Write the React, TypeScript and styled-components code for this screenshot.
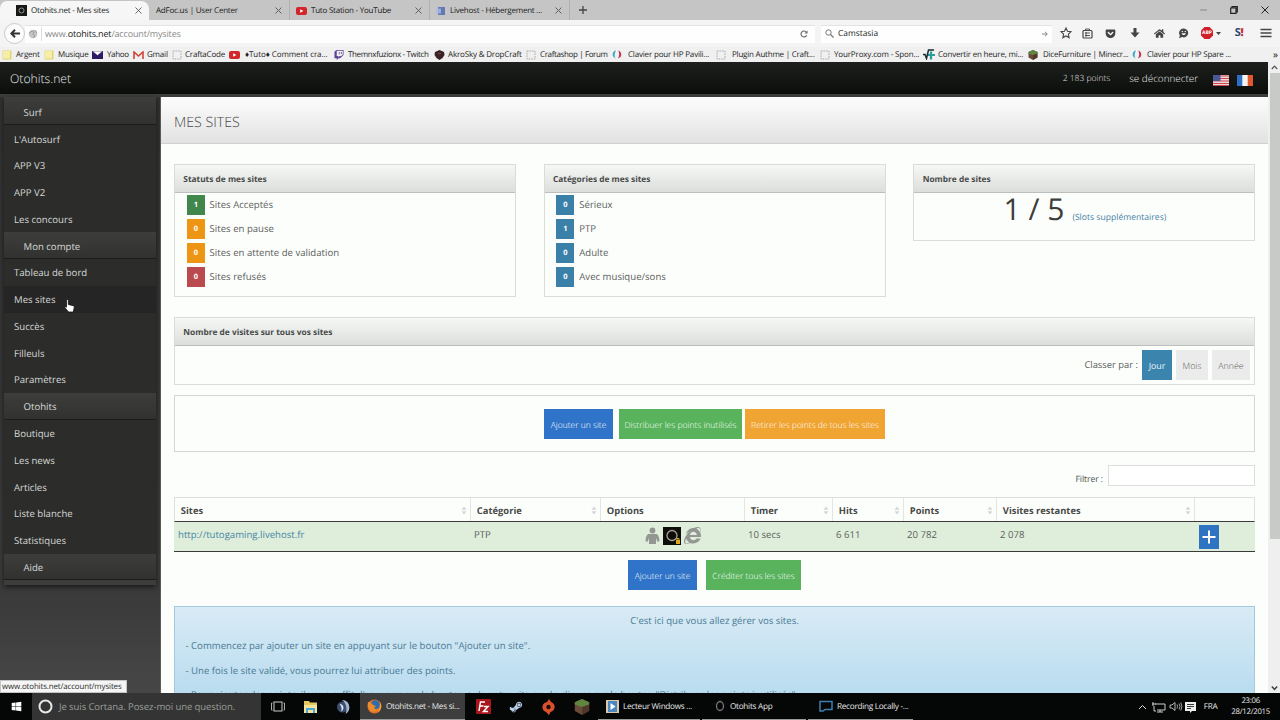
import React from 'react';
import styled, { createGlobalStyle, css } from 'styled-components';
import { FaHome, FaWindows, FaSteamSymbol, FaInternetExplorer, FaTwitch, FaGetPocket } from 'react-icons/fa';

const Global = createGlobalStyle`
  * { box-sizing: border-box; }
  html, body { margin: 0; padding: 0; overflow: hidden; }
  body { font-family: "Open Sans", "Noto Sans", sans-serif; font-size: 9.6px; color: #5c5e5c; text-rendering: geometricPrecision; }
  svg { display: block; flex: none; }
`;

const Screen = styled.div`
  width: 1280px; height: 720px; display: flex; flex-direction: column; overflow: hidden; position: relative; background: #fcfefc;
`;

/* ---------- browser chrome ---------- */
const TabBar = styled.div`
  height: 20px; flex: none; background: #c5c5c5; display: flex; align-items: stretch; color: #1c1c1c; font-size: 8px;
`;
const Tab = styled.div<{ $w: number; $active?: boolean; $pad: number }>`
  width: ${p => p.$w}px; padding-left: ${p => p.$pad}px; padding-right: 7px; padding-top: 1px; display: flex; align-items: center;
  ${p => p.$active ? css`background: #f5f6f5; border-radius: 7px 8px 0 0; margin-top: 1px; padding-bottom: 1px;` : css`border-right: 1px solid #b0b0b0;`}
`;
const TabIcon = styled.span<{ $w?: number }>`
  width: ${p => p.$w ?? 15}px; flex: none; display: flex;
`;
const TabText = styled.span`
  flex: 1; white-space: nowrap; letter-spacing: -0.22px;
`;
const NewTab = styled.div`
  width: 25px; display: flex; align-items: center; justify-content: center;
`;
const WindowButtons = styled.div`
  margin-left: auto; width: 81px; display: flex; justify-content: space-between; align-items: center; padding: 0 11px 0 1px;
`;
const NavBar = styled.div`
  height: 27px; flex: none; background: #f3f4f3; display: flex; align-items: center; padding: 0 8px 0 4px; color: #222;
`;
const BackButton = styled.div`
  width: 21px; height: 21px; border-radius: 50%; border: 1px solid #c9cac9; background: #fbfcfb; display: flex; align-items: center; justify-content: center; flex: none;
`;
const UrlField = styled.div`
  width: 790px; flex: none; height: 18px; background: #fdfefd; display: flex; align-items: center; padding: 0 7px 1px 3px; font-size: 9px; color: #8a8a8a; border-top: 1px solid #e2e3e2;
  b { font-weight: 400; color: #222; }
`;
const UrlDivider = styled.i`
  width: 1px; height: 14px; background: #ddd; margin: 0 3px 0 3px;
`;
const UrlText = styled.span`
  flex: 1; letter-spacing: -0.16px;
`;
const SearchField = styled.div`
  width: 231px; flex: none; height: 18px; margin-left: 6px; background: #fdfefd; border-top: 1px solid #e2e3e2; display: flex; align-items: center; padding: 0 4px 1px; font-size: 8.4px; gap: 4px;
  span { flex: 1; }
`;
const ToolIcons = styled.div`
  flex: 1; display: grid; grid-template-columns: 22px 21px 25px 24px 24px 24px 32px 24px 1fr; justify-items: center; align-items: center; padding: 0 0 1px 3px;
  > :last-child { justify-self: end; }
`;
const AbpWrap = styled.div`
  display: flex; align-items: center; gap: 3px;
`;
const AbpBadge = styled.div`
  width: 12px; height: 12px; background: #cf1f28; color: #fff; font: 700 5px/12px "Open Sans", sans-serif; text-align: center;
  clip-path: polygon(29% 0, 71% 0, 100% 29%, 100% 71%, 71% 100%, 29% 100%, 0 71%, 0 29%);
`;
const SBadge = styled.div`
  font: 700 11px/12px "Open Sans", sans-serif; color: #2b4a78; letter-spacing: -0.3px;
  b { color: #d8262c; }
`;
const Bookmarks = styled.div`
  height: 15px; flex: none; background: #eff0ef; display: flex; align-items: center; padding-left: 2px; color: #1f1f1f; font-size: 8px;
`;
const Bookmark = styled.div<{ $w: number }>`
  width: ${p => p.$w}px; flex: none; display: flex; align-items: center; white-space: nowrap;
`;
const BookmarkIcon = styled.span<{ $w: number }>`
  width: ${p => p.$w}px; flex: none; display: flex;
`;
const BookmarkText = styled.span<{ $ls: number }>`
  letter-spacing: ${p => p.$ls}px;
`;
const More = styled.span`
  font-size: 10px; line-height: 10px; margin: -2px 0 0 1px;
`;

/* ---------- page ---------- */
const Viewport = styled.div`
  height: 631px; flex: none; display: flex;
`;
const Page = styled.div`
  width: 1268px; display: flex; flex-direction: column; overflow: hidden;
`;
const ScrollTrack = styled.div`
  width: 12px; background: #efefef; display: flex; flex-direction: column; align-items: center; padding: 3px 0 1px 1px; justify-content: space-between;
`;
const ScrollThumb = styled.div`
  width: 10px; height: 466px; background: #c8cac8; margin: 3px 0 auto;
`;
const SiteHeader = styled.header`
  height: 35px; flex: none; background: linear-gradient(#1e201e, #0d0f0d 92%); border-bottom: 3px solid #3c3d3c; display: flex; align-items: center; padding: 0 15px 0 10px; color: #d2d4d2;
`;
const Brand = styled.span`
  font-size: 12.2px; flex: 1; font-weight: 300; color: #e6e8e6;
`;
const Points = styled.span`
  font-size: 8.5px; font-weight: 300; margin-right: 19px; color: #e0e2e0;
`;
const Logout = styled.span`
  font-size: 9.9px; font-weight: 300; margin-right: 15px; color: #eceeec;
`;
const Flags = styled.span`
  display: flex; gap: 8px; padding-top: 4px;
`;
const Body = styled.div`
  flex: 1; display: flex; min-height: 0;
`;
const Sidebar = styled.nav`
  width: 161px; flex: none; background: linear-gradient(#303130, #3a3b3a 85%, #464746); border-right: 1px solid #5a5b5a; padding: 0 4px;
`;
const Menu = styled.div`
  width: 152px; background: #2c2d2b; box-shadow: 0 2px 5px #181918; border-bottom: 5px solid #3d3e3c;
`;
const MenuItem = styled.div<{ $head?: boolean; $hover?: boolean; $first?: boolean }>`
  height: ${p => p.$first ? 28.4 : 26.77}px; display: flex; align-items: center; color: #d6d8d6; font-size: 9.6px; padding-left: ${p => p.$head ? 19.5 : 10}px; padding-top: ${p => p.$first ? 2 : 0.6}px;
  ${p => p.$head && css`background: linear-gradient(#3d3e3c, #313230); box-shadow: inset 0 -1px #1b1c1b;`}
  ${p => p.$hover && css`background: #242524;`}
`;
const Content = styled.main`
  flex: 1; background: #fcfefc; min-width: 0; overflow: hidden;
`;
const TitleBar = styled.div`
  height: 47px; background: linear-gradient(#fcfdfc, #e1e2e1); border-bottom: 1px solid #cfd1cf; display: flex; align-items: center; padding: 4px 0 0 13px; font-size: 14.2px; font-weight: 300; color: #484a48;
`;
const Inner = styled.div`
  padding: 20px 13px 0;
`;
const PanelRow = styled.div`
  display: grid; grid-template-columns: 342px 342px 342px; column-gap: 27.7px; align-items: start; padding-bottom: 20px;
`;
const Panel = styled.section<{ $h: number }>`
  height: ${p => p.$h}px; border: 1px solid #dadcda; background: #fcfefc;
`;
const PanelHead = styled.div`
  height: 27.5px; background: linear-gradient(#f6f8f6, #dcdedc); border-bottom: 1.5px solid #bdbfbd; padding: 2px 0 0 8.3px; display: flex; align-items: center; font-size: 8.33px; font-weight: 700; color: #484a48;
`;
const StatList = styled.div`
  padding: 0 0 0 11.8px;
`;
const StatRow = styled.div`
  height: 24px; display: flex; align-items: center; gap: 4.8px;
`;
const Badge = styled.span<{ $c: string }>`
  width: 18px; height: 20px; background: ${p => p.$c}; color: #fff; font-size: 7.5px; font-weight: 700; display: flex; align-items: center; justify-content: center; margin-top: 1px;
`;
const SlotLine = styled.div`
  display: flex; align-items: baseline; justify-content: center; gap: 8px; line-height: 32px; padding-left: 1px;
`;
const BigNumber = styled.span`
  font-size: 30px; color: #3c3e3c; font-weight: 400;
`;
const SlotLink = styled.a`
  color: #4782a6; font-size: 8.6px;
`;
const SortLine = styled.div`
  height: 39px; display: flex; justify-content: flex-end; align-items: center; gap: 4px; padding-right: 4px;
`;
const SortLabel = styled.span`
  font-size: 9.4px; padding-bottom: 2px;
`;
const SortButton = styled.span<{ $w: number; $on?: boolean }>`
  width: ${p => p.$w}px; height: 30px; background: ${p => p.$on ? '#3a84ad' : '#eaebea'}; color: ${p => p.$on ? '#e8f4fa' : '#5c5e5c'};
  display: flex; align-items: center; justify-content: center; font-size: 8.8px; font-weight: ${p => p.$on ? 400 : 300}; padding-top: 2px;
`;
const ActionBox = styled.div`
  margin-top: 9.5px; height: 57px; border: 1px solid #d4d6d4; display: flex; justify-content: center; align-items: center; padding-top: 1px;
`;
const Button = styled.span<{ $c: string; $w: number; $ml?: number }>`
  width: ${p => p.$w}px; height: 30px; margin-left: ${p => p.$ml ?? 0}px; background: ${p => p.$c}; color: #fff; font-size: 8.5px; font-weight: 300;
  display: flex; align-items: center; justify-content: center; padding-top: 3px; white-space: nowrap;
`;
const FilterLine = styled.div`
  height: 45.5px; display: flex; justify-content: flex-end; align-items: flex-start; gap: 5px; font-size: 8.7px; padding-top: 13px;
`;
const FilterLabel = styled.span`
  line-height: 12px; padding-top: 8px; color: #4c4e4c; letter-spacing: -0.1px;
`;
const FilterInput = styled.span`
  width: 147px; height: 21px; border: 1px solid #dcdedc; background: #fff;
`;
const columns = css`
  display: grid; grid-template-columns: 296px 130px 144px 88px 71px 93px 198px 60px;
`;
const TableHead = styled.div`
  ${columns}
  height: 24.5px; border: 1px solid #dddfdd; border-bottom: 1px solid #3a3b3a; font-size: 9.4px; font-weight: 700; color: #484a48;
`;
const HeadCell = styled.div`
  display: flex; align-items: center; justify-content: space-between; padding: 2.5px 3px 0 5.8px; border-right: 1px solid #e3e5e3; white-space: nowrap;
  &:last-child { border-right: 0; }
`;
const TableRow = styled.div`
  ${columns}
  height: 30px; background: #dfeedb; border-bottom: 1px solid #3a3b3a; padding-left: 1px;
`;
const Cell = styled.div<{ $link?: boolean }>`
  padding: 6.3px 0 0 3px; line-height: 13px; color: ${p => p.$link ? '#4786a4' : '#5c5e5c'};
`;
const OptionIcons = styled.div`
  display: flex; align-items: flex-start; gap: 3px; padding: 5px 0 0 44px;
`;
const PlusButton = styled.div`
  width: 20px; height: 24px; margin: 3px 0 0 4px; background: #2f74c3; display: flex; align-items: center; justify-content: center;
`;
const BottomActions = styled.div`
  height: 54px; display: flex; justify-content: center; padding-top: 8px; gap: 9px;
`;
const InfoBox = styled.div`
  height: 120px; border: 1px solid #a3c9dc; background: linear-gradient(#d9ebf5, #bbddf0 80px); color: #4a7a94; padding: 7.5px 10.5px;
  p { margin: 0 0 11.8px; line-height: 13px; }
  p:first-child { text-align: center; }
  p:last-child { margin-top: -0.8px; }
`;

/* ---------- desktop ---------- */
const StatusTip = styled.div`
  position: absolute; left: 0; top: 680px; width: 127px; height: 13px; background: #f4f5f4; border: 1px solid #c4c5c4; color: #2e2e2e; font-size: 7.9px; letter-spacing: -0.12px; line-height: 12px; padding-left: 1px; white-space: nowrap;
`;
const Pointer = styled.div`
  position: absolute; left: 64px; top: 299px;
`;
const Taskbar = styled.div`
  height: 27px; flex: none; background: #050606; color: #e6e6e6; display: flex; align-items: stretch; font-size: 8.2px; letter-spacing: -0.28px;
`;
const StartButton = styled.div`
  width: 32px; display: flex; align-items: center; justify-content: center;
`;
const Cortana = styled.div`
  width: 229px; background: #333433; color: #9c9e9c; display: flex; align-items: center; gap: 6px; padding-left: 6px; font-size: 9.500px; letter-spacing: -0.08px;
`;
const TaskIcon = styled.div<{ $w: number }>`
  width: ${p => p.$w}px; display: flex; align-items: center; justify-content: center; flex: none;
`;
const TaskWindow = styled.div<{ $w: number; $on?: boolean; $pad?: number }>`
  width: ${p => p.$w}px; flex: none; display: flex; align-items: center; gap: 4px; padding-left: ${p => p.$pad ?? 7}px; white-space: nowrap; margin-right: 2px;
  background: ${p => p.$on ? '#3c3d3c' : 'transparent'}; border-bottom: 1px solid #9a9c9a;
`;
const Tray = styled.div`
  margin-left: auto; display: flex; align-items: center; padding-right: 10px;
`;
const Lang = styled.span`
  margin: 0 14px 0 7px; font-size: 8.2px;
`;
const Clock = styled.div`
  text-align: center; font-size: 7.8px; line-height: 11.4px; letter-spacing: -0.27px; padding-top: 1px;
`;

const Close = () => <svg width="7" height="7" viewBox="0 0 7 7"><path d="M.5.5l6 6M6.5.5l-6 6" stroke="#555" strokeWidth=".9" /></svg>;
const YouTube = () => <svg width="11" height="8" viewBox="0 0 11 8"><rect width="11" height="8" rx="2" fill="#d3262b" /><path d="M4.2 2.2v3.6L7.4 4z" fill="#fff" /></svg>;
const Folder = () => <svg width="10" height="10" viewBox="0 0 10 10"><rect x=".5" y=".5" width="9" height="9" rx="1" fill="#e3d272" /><path d="M1 1h7v7.500H1z" fill="#f7eea6" /></svg>;
const Blank = () => <svg width="10" height="10" viewBox="0 0 10 10"><rect x="1" y="1" width="8" height="8" fill="none" stroke="#999" strokeWidth=".8" strokeDasharray="1.6 1" /></svg>;
const Mail = () => <svg width="11" height="8" viewBox="0 0 11 8"><rect width="11" height="8" fill="#2c1a68" /><path d="M0 0l5.5 4.5L11 0z" fill="#fff" stroke="#2c1a68" strokeWidth=".6" /></svg>;
const Gmail = () => <svg width="11" height="8" viewBox="0 0 11 8"><rect width="11" height="8" fill="#eee" /><path d="M1 8V1l4.5 4L10 1v7" fill="none" stroke="#d0453c" strokeWidth="1.6" /></svg>;
const Akro = () => <svg width="11" height="10" viewBox="0 0 11 10"><path d="M5.5 0L10 2l.5 3-2 3-3 2-3-2-2-3L1 2z" fill="#3b2226" /><path d="M4 3l2 1 1-1" stroke="#9a5a5a" fill="none" strokeWidth=".8" /></svg>;
const Clavier = () => <svg width="10" height="9" viewBox="0 0 10 9"><path d="M4 .5C1 1 0 4 1.200 6.500L3.500 8.500C2 6 2.500 3 4 .5z" fill="#37a7c8" /><path d="M6.300.5C9.500 1.500 10 5 8.500 7L6 8.500C7.500 6 7.500 3 6.300.5z" fill="#c53350" /></svg>;
const Convert = () => <svg width="12" height="11" viewBox="0 0 12 11"><path d="M8 2.500v8M5 6h7" stroke="#2b9c9c" strokeWidth="2.200" /><path d="M0 5.500h2l1.500 4L5.500 1H11" fill="none" stroke="#1c2b2b" strokeWidth="1.500" /></svg>;
const Block = ({ s = 10 }: { s?: number }) => <svg width={s} height={s} viewBox="0 0 10 10"><path d="M5 0l4.500 2v5.500L5 10 .5 7.500V2z" fill="#6a4a38" /><path d="M5 0l4.500 2v1.500L5 5 .5 3.500V2z" fill="#5f8540" /><path d="M5 5v5l4.500-2.500v-4z" fill="#3e2c22" opacity=".6" /></svg>;
const Sort = () => <svg width="6" height="9" viewBox="0 0 6 9"><path d="M3 .5L5.500 3.800H.5zM3 8.500L.5 5.200h5z" fill="#d3d5d3" /></svg>;
const Bars = () => <svg width="12" height="10" viewBox="0 0 12 10"><path d="M.5 1.500h11M.5 5h11M.5 8.500h11" stroke="#444" strokeWidth="1.700" /></svg>;

const bookmarks: { icon: React.ReactNode; text: string; w: number; iw: number; ls?: number }[] = [
  { icon: <Folder />, text: 'Argent', w: 42, iw: 14, ls: -0.2 },
  { icon: <Folder />, text: 'Musique', w: 48, iw: 14, ls: -0.25 },
  { icon: <Mail />, text: 'Yahoo', w: 41, iw: 15, ls: -0.35 },
  { icon: <Gmail />, text: 'Gmail', w: 39, iw: 14, ls: -0.2 },
  { icon: <Blank />, text: 'CraftaCode', w: 57, iw: 13, ls: -0.2 },
  { icon: <YouTube />, text: '♦Tuto♦ Comment cra...', w: 105, iw: 16, ls: -0.07 },
  { icon: <FaTwitch size={10} color="#5b4496" />, text: 'Themnxfuzionx - Twitch', w: 100, iw: 14, ls: -0.36 },
  { icon: <Akro />, text: 'AkroSky & DropCraft', w: 92, iw: 14, ls: -0.17 },
  { icon: <Blank />, text: 'Craftashop | Forum', w: 86, iw: 14, ls: -0.37 },
  { icon: <Clavier />, text: 'Clavier pour HP Pavili...', w: 104, iw: 16, ls: -0.18 },
  { icon: <Blank />, text: 'Plugin Authme | Craft...', w: 104, iw: 16, ls: -0.22 },
  { icon: <Blank />, text: 'YourProxy.com - Spon...', w: 103, iw: 14, ls: -0.15 },
  { icon: <Convert />, text: 'Convertir en heure, mi...', w: 105, iw: 15, ls: -0.2 },
  { icon: <Block />, text: 'DiceFurniture | Minecr...', w: 104, iw: 15, ls: -0.24 },
  { icon: <Clavier />, text: 'Clavier pour HP Spare ...', w: 140, iw: 15, ls: -0.24 },
];

const menu: { text: string; head?: boolean; hover?: boolean }[] = [
  { text: 'Surf', head: true }, { text: "L'Autosurf" }, { text: 'APP V3' }, { text: 'APP V2' }, { text: 'Les concours' },
  { text: 'Mon compte', head: true }, { text: 'Tableau de bord' }, { text: 'Mes sites', hover: true }, { text: 'Succès' }, { text: 'Filleuls' }, { text: 'Paramètres' },
  { text: 'Otohits', head: true }, { text: 'Boutique' }, { text: 'Les news' }, { text: 'Articles' }, { text: 'Liste blanche' }, { text: 'Statistiques' },
  { text: 'Aide', head: true },
];

const statuses = [
  { n: 1, c: '#41864a', t: 'Sites Acceptés' },
  { n: 0, c: '#ee9613', t: 'Sites en pause' },
  { n: 0, c: '#ee9613', t: 'Sites en attente de validation' },
  { n: 0, c: '#bb4a4e', t: 'Sites refusés' },
];
const categories = [
  { n: 0, c: '#3a80a9', t: 'Sérieux' },
  { n: 1, c: '#3a80a9', t: 'PTP' },
  { n: 0, c: '#3a80a9', t: 'Adulte' },
  { n: 0, c: '#3a80a9', t: 'Avec musique/sons' },
];

const Stats = ({ title, rows }: { title: string; rows: typeof statuses }) => (
  <Panel $h={133}>
    <PanelHead>{title}</PanelHead>
    <StatList>
      {rows.map(r => <StatRow key={r.t}><Badge $c={r.c}>{r.n}</Badge>{r.t}</StatRow>)}
    </StatList>
  </Panel>
);

export default function App() {
  return (
    <Screen>
      <Global />
      <TabBar>
        <Tab $w={149} $pad={16} $active>
          <TabIcon><svg width="11" height="11" viewBox="0 0 11 11"><rect width="11" height="11" fill="#161816" /><circle cx="5.500" cy="5.500" r="2.500" fill="none" stroke="#999" /></svg></TabIcon>
          <TabText>Otohits.net - Mes sites</TabText><Close />
        </Tab>
        <Tab $w={141} $pad={7}><TabText>AdFoc.us | User Center</TabText><Close /></Tab>
        <Tab $w={140} $pad={6}><TabIcon><YouTube /></TabIcon><TabText>Tuto Station - YouTube</TabText><Close /></Tab>
        <Tab $w={140} $pad={6}>
          <TabIcon $w={14}><svg width="10" height="10" viewBox="0 0 10 10"><path d="M2 1h7v8H2z" fill="#6478b4" /><path d="M0 2.500h5v5H0z" fill="#a9bce0" opacity=".8" /></svg></TabIcon>
          <TabText>Livehost - Hébergement ...</TabText><Close />
        </Tab>
        <NewTab><svg width="8" height="8" viewBox="0 0 8 8"><path d="M4 0v8M0 4h8" stroke="#444" strokeWidth="1.300" /></svg></NewTab>
        <WindowButtons>
          <svg width="7" height="2"><path d="M0 1h7" stroke="#888" /></svg>
          <svg width="8" height="8" viewBox="0 0 8 8"><path d="M2 2V.700h5.300V6H6M.7 2h5.300v5.300H.7z" fill="none" stroke="#222" strokeWidth="1.200" /></svg>
          <svg width="8" height="8" viewBox="0 0 8 8"><path d="M.5.5l7 7M7.500.5l-7 7" stroke="#222" strokeWidth="1" /></svg>
        </WindowButtons>
      </TabBar>
      <NavBar>
        <BackButton><svg width="10" height="9" viewBox="0 0 10 9"><path d="M5 .8L1.300 4.500 5 8.200M1.500 4.500H10" fill="none" stroke="#333" strokeWidth="2" /></svg></BackButton>
        <UrlField>
          <svg width="10" height="10" viewBox="0 0 10 10"><circle cx="5" cy="5" r="4.300" fill="#c4c5c4" /><path d="M1 4l3-2 2 1-1 2 2 2-2 2M7 1l2 3" stroke="#9a9b9a" fill="none" /></svg>
          <UrlDivider />
          <UrlText>www.<b>otohits.net</b>/account/mysites</UrlText>
          <svg width="8" height="8" viewBox="0 0 8 8"><path d="M6.700 5.300A3 3 0 1 1 6.500 2.300" fill="none" stroke="#666" strokeWidth="1.100" /><path d="M7.500.5v3h-3z" fill="#666" /></svg>
        </UrlField>
        <SearchField>
          <svg width="9" height="9" viewBox="0 0 9 9"><circle cx="3.500" cy="3.500" r="2.700" fill="none" stroke="#777" /><path d="M5.500 5.500l3 3" stroke="#777" strokeWidth="1.200" /></svg>
          <span>Camstasia</span>
          <svg width="6" height="6" viewBox="0 0 6 6"><path d="M0 3h5M3 .8L5.300 3 3 5.200" fill="none" stroke="#777" strokeWidth=".9" /></svg>
        </SearchField>
        <ToolIcons>
          <svg width="12" height="12" viewBox="0 0 12 12"><path d="M6 1l1.500 3.300 3.500.4-2.600 2.400.7 3.500L6 8.900 2.900 10.600l.7-3.500L1 4.700l3.500-.4z" fill="none" stroke="#444" strokeWidth="1.100" /></svg>
          <svg width="11" height="11" viewBox="0 0 11 11"><rect x="1" y="2.500" width="9" height="7.500" rx="1" fill="none" stroke="#444" strokeWidth="1.200" /><path d="M3.500 2.500V1h4v1.500M3 5h5M3 7.500h5M4 4v5" fill="none" stroke="#444" strokeWidth=".9" /></svg>
          <FaGetPocket size={11} color="#444" />
          <svg width="10" height="10" viewBox="0 0 10 10"><path d="M3.500 0h3v4.500h3L5 9.500.5 4.500h3z" fill="#444" /></svg>
          <FaHome size={11} color="#444" />
          <svg width="11" height="11" viewBox="0 0 11 11"><path d="M5.800.6a4.400 4.400 0 1 1-1.600 8.500L1 10.300l.9-2.800A4.400 4.400 0 0 1 5.800.6z" fill="#444" /><path d="M3.500 5.300c.7 2.400 3.800 2.400 4.500 0z" fill="#f3f4f3" /><circle cx="4.300" cy="3.500" r=".7" fill="#f3f4f3" /><circle cx="7.300" cy="3.500" r=".7" fill="#f3f4f3" /></svg>
          <AbpWrap><AbpBadge>ABP</AbpBadge><svg width="5" height="3"><path d="M0 0h5L2.500 3z" fill="#444" /></svg></AbpWrap>
          <SBadge>S<b>!</b></SBadge>
          <Bars />
        </ToolIcons>
      </NavBar>
      <Bookmarks>
        {bookmarks.map((b, i) => (
          <Bookmark key={i} $w={b.w}><BookmarkIcon $w={b.iw}>{b.icon}</BookmarkIcon><BookmarkText $ls={b.ls ?? 0}>{b.text}</BookmarkText></Bookmark>
        ))}
        <More>»</More>
      </Bookmarks>

      <Viewport>
        <Page>
          <SiteHeader>
            <Brand>Otohits.net</Brand>
            <Points>2 183 points</Points>
            <Logout>se déconnecter</Logout>
            <Flags>
              <svg width="16" height="11" viewBox="0 0 16 11"><rect width="16" height="11" fill="#f0d8d8" /><path d="M0 1h16M0 3.500h16M0 6h16M0 8.500h16M0 10.700h16" stroke="#c94552" strokeWidth="1.200" /><rect width="7.500" height="6" fill="#4b5896" /></svg>
              <svg width="16" height="11" viewBox="0 0 16 11"><rect width="16" height="11" fill="#f4f4f4" /><rect width="5.300" height="11" fill="#2c6fc4" /><rect x="10.700" width="5.300" height="11" fill="#e0582c" /></svg>
            </Flags>
          </SiteHeader>
          <Body>
            <Sidebar>
              <Menu>
                {menu.map((m, i) => <MenuItem key={m.text} $head={m.head} $hover={m.hover} $first={i === 0}>{m.text}</MenuItem>)}
              </Menu>
            </Sidebar>
            <Content>
              <TitleBar>MES SITES</TitleBar>
              <Inner>
                <PanelRow>
                  <Stats title="Statuts de mes sites" rows={statuses} />
                  <Stats title="Catégories de mes sites" rows={categories} />
                  <Panel $h={77}>
                    <PanelHead>Nombre de sites</PanelHead>
                    <SlotLine><BigNumber>1 / 5</BigNumber><SlotLink>(Slots supplémentaires)</SlotLink></SlotLine>
                  </Panel>
                </PanelRow>
                <Panel $h={68}>
                  <PanelHead>Nombre de visites sur tous vos sites</PanelHead>
                  <SortLine>
                    <SortLabel>Classer par :</SortLabel>
                    <SortButton $w={30} $on>Jour</SortButton>
                    <SortButton $w={32}>Mois</SortButton>
                    <SortButton $w={38}>Année</SortButton>
                  </SortLine>
                </Panel>
                <ActionBox>
                  <Button $c="#2f74c8" $w={69}>Ajouter un site</Button>
                  <Button $c="#58b35c" $w={123} $ml={6}>Distribuer les points inutilisés</Button>
                  <Button $c="#f0a432" $w={140} $ml={3}>Retirer les points de tous les sites</Button>
                </ActionBox>
                <FilterLine><FilterLabel>Filtrer :</FilterLabel><FilterInput /></FilterLine>
                <TableHead>
                  <HeadCell>Sites<Sort /></HeadCell>
                  <HeadCell>Catégorie<Sort /></HeadCell>
                  <HeadCell>Options</HeadCell>
                  <HeadCell>Timer<Sort /></HeadCell>
                  <HeadCell>Hits<Sort /></HeadCell>
                  <HeadCell>Points<Sort /></HeadCell>
                  <HeadCell>Visites restantes<Sort /></HeadCell>
                  <HeadCell />
                </TableHead>
                <TableRow>
                  <Cell $link>http://tutogaming.livehost.fr</Cell>
                  <Cell>PTP</Cell>
                  <OptionIcons>
                    <svg width="15" height="18" viewBox="0 0 15 18"><circle cx="7.500" cy="3.500" r="2.900" fill="#949694" /><path d="M4 7h7c2 0 3 2 3.500 7l-2 1-1.500-4v6H4v-6l-1.500 4-2-1C1 9 2 7 4 7z" fill="#949694" /></svg>
                    <svg width="18" height="18" viewBox="0 0 18 18"><rect width="18" height="18" fill="#0d0e0b" /><circle cx="9" cy="8.500" r="5" fill="none" stroke="#a8a090" strokeWidth="1.300" /><path d="M13 13h4v4h-4z" fill="#e0a820" /><path d="M14 13v-1.500h2V13" stroke="#e0a820" fill="none" /></svg>
                    <FaInternetExplorer size={17} color="#949694" />
                  </OptionIcons>
                  <Cell>10 secs</Cell>
                  <Cell>6 611</Cell>
                  <Cell>20 782</Cell>
                  <Cell>2 078</Cell>
                  <PlusButton><svg width="14" height="14" viewBox="0 0 14 14"><path d="M7 .5v13M.5 7h13" stroke="#fff" strokeWidth="2" /></svg></PlusButton>
                </TableRow>
                <BottomActions>
                  <Button $c="#2f74c8" $w={69}>Ajouter un site</Button>
                  <Button $c="#58b35c" $w={95}>Créditer tous les sites</Button>
                </BottomActions>
                <InfoBox>
                  <p>C'est ici que vous allez gérer vos sites.</p>
                  <p>- Commencez par ajouter un site en appuyant sur le bouton "Ajouter un site".</p>
                  <p>- Une fois le site validé, vous pourrez lui attribuer des points.</p>
                  <p>- Pour ajouter des points, il vous suffit d'appuyer sur le bouton + de votre site ou de cliquer sur le bouton "Distribuer les points inutilisés".</p>
                </InfoBox>
              </Inner>
            </Content>
          </Body>
        </Page>
        <ScrollTrack>
          <svg width="7" height="5" viewBox="0 0 7 5"><path d="M.8 4L3.500 1.200 6.200 4" fill="none" stroke="#555" strokeWidth="1.200" /></svg>
          <ScrollThumb />
          <svg width="7" height="7" viewBox="0 0 7 7"><path d="M.8 1.500L3.500 4.300 6.200 1.500" fill="none" stroke="#444" strokeWidth="1.500" /></svg>
        </ScrollTrack>
      </Viewport>

      <Taskbar>
        <StartButton><FaWindows size={11} color="#fff" /></StartButton>
        <Cortana><svg width="15" height="15" viewBox="0 0 15 15"><circle cx="7.500" cy="7.500" r="6" fill="none" stroke="#e8e8e8" strokeWidth="2" /></svg>Je suis Cortana. Posez-moi une question.</Cortana>
        <TaskIcon $w={33}><svg width="14" height="11" viewBox="0 0 14 11"><rect x="3" y="1" width="8" height="9" fill="none" stroke="#ccc" /><path d="M1.500 2H.5v7h1M12.500 2h1v7h-1" fill="none" stroke="#aaa" /></svg></TaskIcon>
        <TaskIcon $w={33}><svg width="15" height="14" viewBox="0 0 15 14"><path d="M1 1h5l1 1.500h7V13H1z" fill="#e6c75d" /><path d="M1 5h13v8H1z" fill="#f5e39a" /><path d="M4 13V9h7v4" fill="none" stroke="#4aa8d8" strokeWidth="2" /></svg></TaskIcon>
        <TaskIcon $w={33}><svg width="15" height="16" viewBox="0 0 15 16"><circle cx="6.500" cy="8" r="5.500" fill="#3c4e70" /><path d="M6 1c8-.5 10 11 3.500 14 2-5 1-11-3.500-14z" fill="#a3b4d0" /><path d="M3.500 5c5 0 5 6 1.500 7.500 1-2 1-5-1.500-7.500z" fill="#dde6f2" /></svg></TaskIcon>
        <TaskWindow $w={105} $on>
          <svg width="15" height="15" viewBox="0 0 15 15"><circle cx="7.500" cy="7.500" r="7" fill="#e2702a" /><circle cx="8.200" cy="6" r="4.700" fill="#2f6ca8" /><path d="M1 3c2 0 4 1 5 3l3 1-2 2c1 1.500 3 1.500 5 0-1 3-4 4.500-7 3.500C1.500 11 .3 7 1 3z" fill="#ee8a2c" /><path d="M13 3c2 4 1 8-2 10 1.500-3 2.500-6 2-10z" fill="#f2b33a" /></svg>
          Otohits.net - Mes si...
        </TaskWindow>
        <TaskIcon $w={33}><svg width="15" height="15" viewBox="0 0 15 15"><rect width="15" height="15" rx="1" fill="#a8161b" /><path d="M3 12L4.500 3H9M4 7h3.500M8 7.500h4L7.500 12.500h4.500" fill="none" stroke="#fff" strokeWidth="1.500" /></svg></TaskIcon>
        <TaskIcon $w={32}><FaSteamSymbol size={14} color="#b9cde6" /></TaskIcon>
        <TaskIcon $w={33}><svg width="13" height="16" viewBox="0 0 13 16"><path d="M7 0l2 3c3 1 4 3.500 3.500 6S10 12.500 8.500 13L7 16l-3-3C1 12 0 9.500.5 7S3 3.500 5 3z" fill="#d9512c" /><circle cx="6.500" cy="8" r="2.200" fill="#1b0c08" /></svg></TaskIcon>
        <TaskIcon $w={33}><Block s={16} /></TaskIcon>
        <TaskWindow $w={102} $pad={8}><svg width="13" height="13" viewBox="0 0 13 13"><rect width="13" height="13" fill="#dcc9a8" /><rect x="2" y="1" width="9" height="11" fill="#4a86c0" /><path d="M4.500 3v7l5-3.500z" fill="#fff" /></svg>Lecteur Windows ...</TaskWindow>
        <TaskWindow $w={104} $pad={13}><svg width="11" height="12" viewBox="0 0 11 12"><ellipse cx="5" cy="6" rx="3.500" ry="4.500" fill="none" stroke="#777" strokeWidth="1.300" /></svg>Otohits App</TaskWindow>
        <TaskWindow $w={105} $pad={11}><svg width="14" height="12" viewBox="0 0 14 12"><path d="M1 1.500h12v8H6l-2 1.500H1z" fill="none" stroke="#3f7fb0" strokeWidth="1.500" /></svg>Recording Locally -...</TaskWindow>
        <Tray>
          <svg width="9" height="6" viewBox="0 0 9 6"><path d="M1 5l3.500-3.500L8 5" fill="none" stroke="#ddd" /></svg>
          <svg width="22" height="12" viewBox="2 0 22 12"><path d="M10 3h10v6h-8M7 3h4M8 1v4M12 11h6M15 9v2M9 5v5h2" fill="none" stroke="#ccc" /></svg>
          <svg width="14" height="11" viewBox="0 0 14 11"><path d="M1 4h2l3-2.500v8L3 7H1z" fill="none" stroke="#ccc" strokeWidth=".9" /><path d="M8 3.500q1 2 0 4M10 2.500q2 3 0 6M11.800 1.500q2.200 4 0 8" fill="none" stroke="#ccc" strokeWidth=".8" /></svg>
          <svg width="14" height="12" viewBox="0 0 14 12"><path d="M2 1h11v9H9l-2 2v-2H2z" fill="#eee" /><path d="M4 3.500h7M4 5.500h7M4 7.500h4" stroke="#222" strokeWidth=".9" /></svg>
          <Lang>FRA</Lang>
          <Clock>23:06<br />28/12/2015</Clock>
        </Tray>
      </Taskbar>
      <StatusTip>www.otohits.net/account/mysites</StatusTip>
      <Pointer>
        <svg width="12" height="15" viewBox="0 0 12 15"><path d="M2.500 1.200c0-1 1.800-1 1.800 0v4.300l5 1.200c1 .3 1 1 .9 2L9.300 13H4.500L1 8.800c-.5-.9.600-1.500 1.500-.6z" fill="#fff" stroke="#111" strokeWidth=".8" /></svg>
      </Pointer>
    </Screen>
  );
}
